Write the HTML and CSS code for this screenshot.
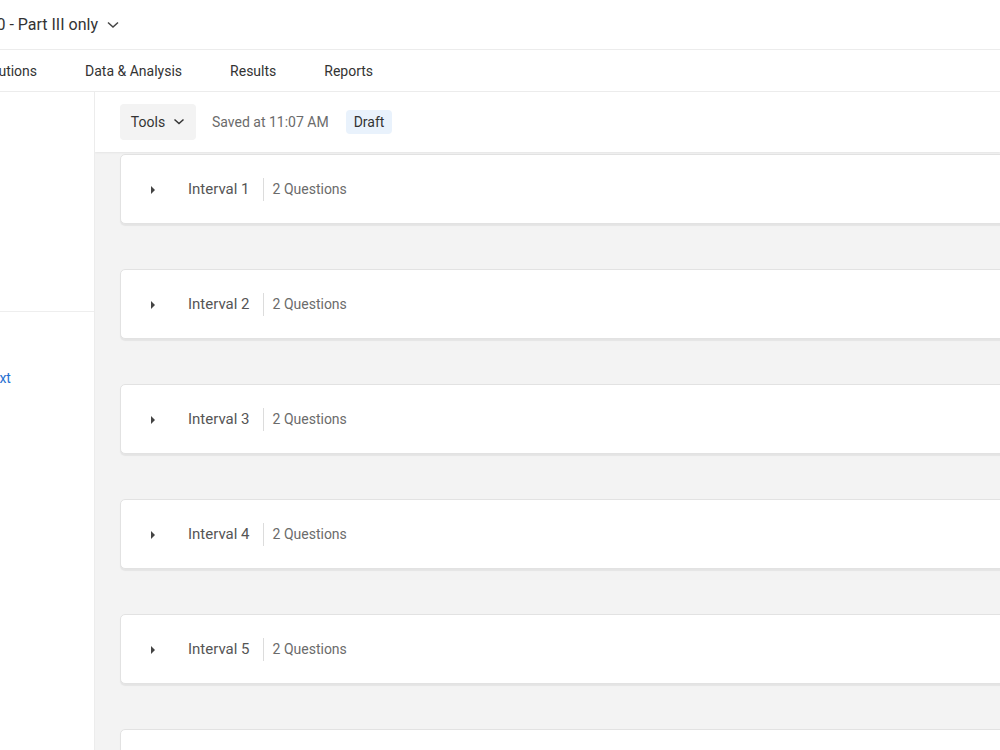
FILE: index.html
```html
<!DOCTYPE html>
<html lang="en">
<head>
    <meta charset="UTF-8">
    <meta name="viewport" content="width=device-width, initial-scale=1.0">
    <title>Survey Editor</title>
    <link rel="stylesheet" href="styles.css">
</head>
<body>
    <header class="topbar">
        <div class="survey-title">Survey 2020 - Part III only
            <svg class="chevron" width="12" height="8" viewBox="0 0 12 8"><path d="M1 1.5l5 4.5 5-4.5" fill="none" stroke="#444" stroke-width="1.5"/></svg>
        </div>
    </header>

    <nav class="tabs">
        <a class="tab first">Distributions</a>
        <a class="tab">Data &amp; Analysis</a>
        <a class="tab">Results</a>
        <a class="tab">Reports</a>
    </nav>

    <div class="workspace">
        <aside class="sidebar">
            <div class="sidebar-top"></div>
            <div class="sidebar-bottom">
                <a class="side-link">Add text</a>
            </div>
        </aside>

        <main class="editor">
            <div class="toolbar">
                <button class="tools-btn">Tools
                    <svg width="12" height="8" viewBox="0 0 12 8"><path d="M1.5 1.5l4.5 4 4.5-4" fill="none" stroke="#333" stroke-width="1.5"/></svg>
                </button>
                <span class="saved">Saved at 11:07 AM</span>
                <span class="badge">Draft</span>
            </div>

            <div class="blocks">
                <div class="block">
                    <span class="caret"></span>
                    <span class="block-name">Interval 1</span>
                    <span class="block-count">2 Questions</span>
                </div>
                <div class="block">
                    <span class="caret"></span>
                    <span class="block-name">Interval 2</span>
                    <span class="block-count">2 Questions</span>
                </div>
                <div class="block">
                    <span class="caret"></span>
                    <span class="block-name">Interval 3</span>
                    <span class="block-count">2 Questions</span>
                </div>
                <div class="block">
                    <span class="caret"></span>
                    <span class="block-name">Interval 4</span>
                    <span class="block-count">2 Questions</span>
                </div>
                <div class="block">
                    <span class="caret"></span>
                    <span class="block-name">Interval 5</span>
                    <span class="block-count">2 Questions</span>
                </div>
                <div class="block">
                    <span class="caret"></span>
                    <span class="block-name">Interval 6</span>
                    <span class="block-count">2 Questions</span>
                </div>
            </div>
        </main>
    </div>
</body>
</html>
```

FILE: styles.css
```css
body {
    margin: 0;
    height: 750px;
    overflow: hidden;
    font-family: Roboto, "Liberation Sans", sans-serif;
    color: #333;
    background-color: #fff;
}

.topbar {
    height: 49px;
    border-bottom: 1px solid #ececec;
    display: flex;
    align-items: center;
    overflow: hidden;
}

.survey-title {
    margin-left: -82px;
    font-size: 16px;
    color: #333;
    white-space: nowrap;
    display: flex;
    align-items: center;
    gap: 9px;
}

.tabs {
    height: 41px;
    border-bottom: 1px solid #ececec;
    display: flex;
    align-items: center;
    gap: 48px;
    white-space: nowrap;
    overflow: hidden;
}

.tab {
    font-size: 14px;
    color: #333;
}

.tab.first {
    margin-left: -42px;
}

.workspace {
    display: flex;
    height: 660px;
}

.sidebar {
    width: 94px;
    flex-shrink: 0;
    border-right: 1px solid #ececec;
    overflow: hidden;
}

.sidebar-top {
    height: 219px;
    border-bottom: 1px solid #eeeeee;
}

.sidebar-bottom {
    padding-top: 58px;
    white-space: nowrap;
}

.side-link {
    display: block;
    margin-left: -41px;
    font-size: 14px;
    color: #1f6fd1;
}

.editor {
    flex: 1;
    background-color: #f3f3f3;
    overflow: hidden;
}

.toolbar {
    height: 60px;
    background-color: #fff;
    display: flex;
    align-items: center;
    padding-left: 25px;
    box-shadow: 0 1px 2px rgba(0, 0, 0, 0.06);
}

.tools-btn {
    height: 36px;
    width: 76px;
    border: none;
    border-radius: 4px;
    background-color: #f3f3f3;
    font-family: inherit;
    font-size: 14px;
    color: #333;
    display: flex;
    align-items: center;
    justify-content: center;
    gap: 8px;
    padding: 0;
}

.saved {
    margin-left: 16px;
    font-size: 14px;
    color: #6b6b6b;
}

.badge {
    margin-left: 17px;
    padding: 4px 8px;
    border-radius: 4px;
    background-color: #e9f2fc;
    font-size: 14px;
    color: #333;
}

.blocks {
    padding: 2px 0 0 25px;
    display: flex;
    flex-direction: column;
    gap: 45px;
}

.block {
    width: 1000px;
    height: 68px;
    background-color: #fff;
    border: 1px solid #e2e2e2;
    border-radius: 5px;
    box-shadow: 0 2px 1px rgba(0, 0, 0, 0.06);
    display: flex;
    align-items: center;
}

.caret {
    width: 0;
    height: 0;
    margin-left: 30px;
    margin-top: 2px;
    border-top: 4px solid transparent;
    border-bottom: 4px solid transparent;
    border-left: 4px solid #444;
}

.block-name {
    margin-left: 33px;
    padding-right: 13px;
    border-right: 1px solid #dcdcdc;
    line-height: 23px;
    font-size: 15px;
    color: #555;
}

.block-count {
    margin-left: 9px;
    font-size: 14px;
    color: #6b6b6b;
}
```
